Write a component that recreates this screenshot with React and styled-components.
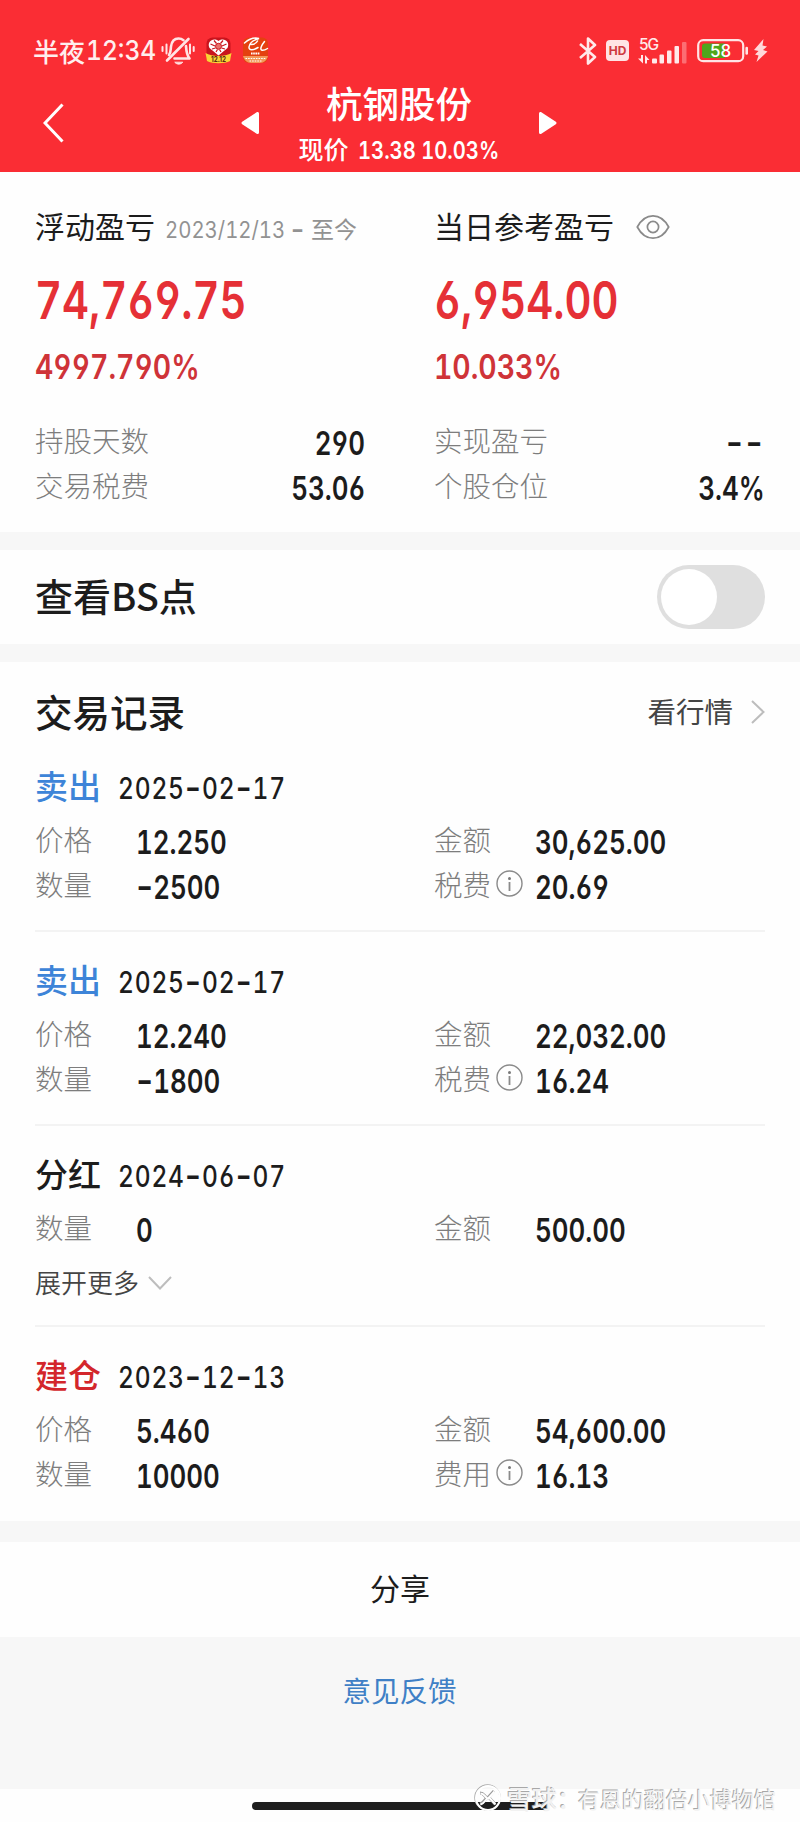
import { useState } from "react";
import styled, { createGlobalStyle } from "styled-components";

const GlobalStyle = createGlobalStyle`
  body {
    margin: 0;
    background: #fefefe;
    font-family: "Noto Sans CJK SC", sans-serif;
    color: #1c1c1c;
  }

  * {
    box-sizing: border-box;
  }
`;

const Page = styled.div`
  position: relative;
  width: 800px;
  height: 1822px;
  overflow: hidden;
  display: flex;
  flex-direction: column;
`;

const Header = styled.header`
  height: 172px;
  background: #fa2d34;
  color: #fff;
`;

const StatusBar = styled.div`
  display: flex;
  align-items: center;
  height: 72px;
  padding: 29px 32px 0 33px;
`;

const StatusTime = styled.div`
  display: flex;
  align-items: center;
  gap: 1px;
  font-size: 26px;
  font-weight: 500;
  line-height: 44px;
  width: 128px;
  color: #ffeeee;
  white-space: nowrap;
`;

const StatusIcons = styled.div`
  display: flex;
  align-items: center;
  gap: ${(props) => props.$gap}px;
  margin-left: ${(props) => props.$push || 0};
`;

const NavBar = styled.div`
  display: flex;
  align-items: center;
  height: 100px;
  padding: 2px 43px 0;
`;

const NavCenter = styled.div`
  width: 280px;
  display: flex;
  flex-direction: column;
  align-items: center;
`;

const StockName = styled.div`
  font-size: 36.5px;
  font-weight: 500;
  line-height: 46px;
  margin-top: 2px;
  margin-bottom: 1px;
`;

const StockPrice = styled.div`
  display: flex;
  align-items: center;
  gap: 9px;
  width: 201px;
  font-size: 25px;
  font-weight: 500;
  line-height: 42px;
  white-space: nowrap;
`;

// Narrow upright figures, squeezed horizontally
const Figures = styled.span`
  display: inline-block;
  font-family: Inter, sans-serif;
  font-size: ${(props) => props.$size || 33}px;
  font-weight: ${(props) => props.$weight || 600};
  font-feature-settings: "tnum", "cv03", "cv04";
  letter-spacing: ${(props) => props.$spacing || 0}px;
  transform: translateY(${(props) => props.$drop ?? 3.5}px)
    scaleX(${(props) => props.$squeeze || 0.785});
  transform-origin: ${(props) => props.$origin || "left"} center;
  white-space: nowrap;
`;

const Dash = styled.span`
  font-size: 1.45em;
  font-weight: 400;
  font-feature-settings: normal;
  line-height: 0;
  vertical-align: -0.09em;
`;

const Num = ({ children, ...rest }) => (
  <Figures {...rest}>
    {children.split(/(-+)/).map((part, i) =>
      part.startsWith("-") ? <Dash key={i}>{part}</Dash> : part
    )}
  </Figures>
);

const Section = styled.section`
  background: #fefefe;
  border-bottom: ${(props) => props.$gap || 0}px solid #f7f7f7;
`;

const Summary = styled(Section)`
  display: grid;
  grid-template-columns: 330px 331px;
  column-gap: 69px;
  height: 378px;
  padding: 31px 35px 0 35px;
`;

const SummaryTitle = styled.div`
  display: flex;
  align-items: center;
  height: 44px;
  font-size: 30px;
  line-height: 44px;
  white-space: nowrap;
`;

const Period = styled.span`
  display: flex;
  align-items: center;
  margin-left: 10px;
  padding-top: 5px;
  font-size: 23px;
  color: #929292;
`;

const PeriodStart = styled.span`
  width: 146px;
`;

const EyeButton = styled.span`
  display: flex;
  margin: 3px 0 0 22px;
`;

const Profit = styled.div`
  display: flex;
  align-items: center;
  height: 66px;
  margin-top: 16px;
  color: #e53036;
`;

const ProfitRate = styled.div`
  display: flex;
  align-items: center;
  height: 46px;
  margin: 10px 0 32px;
  color: #cf3338;
`;

const Row = styled.div`
  display: flex;
  align-items: center;
  height: 45px;
  line-height: 45px;
`;

const Label = styled.span`
  display: flex;
  align-items: center;
  gap: 5px;
  width: ${(props) => props.$width || "auto"};
  font-size: 28.5px;
  font-weight: 300;
  color: #7d7d7d;
`;

const StatRow = styled(Row)`
  justify-content: space-between;
`;

const ToggleSection = styled(Section)`
  display: flex;
  align-items: center;
  justify-content: space-between;
  height: 112px;
  padding: 0 35px 0 35px;
`;

const ToggleLabel = styled.div`
  font-size: 38px;
  font-weight: 500;
  line-height: 60px;
  margin-bottom: 4px;
`;

const Switch = styled.button`
  width: 108px;
  height: 64px;
  padding: 4px;
  border: 0;
  border-radius: 32px;
  background: ${(props) => (props.$on ? "#fa2d34" : "#dfdfdf")};
  display: flex;
  justify-content: ${(props) => (props.$on ? "flex-end" : "flex-start")};
`;

const Knob = styled.span`
  width: 56px;
  height: 56px;
  border-radius: 50%;
  background: #fff;
`;

const Records = styled(Section)`
  height: 880px;
  padding: 19px 35px 0 35px;
`;

const RecordsHead = styled.div`
  display: flex;
  align-items: center;
  justify-content: space-between;
  height: 58px;
  font-size: 37.5px;
  font-weight: 500;
`;

const MarketLink = styled.a`
  display: flex;
  align-items: center;
  gap: 18px;
  font-size: 28.5px;
  font-weight: 400;
  color: #444;

  svg {
    margin-top: 4px;
  }
`;

const Record = styled.div`
  padding: ${(props) => (props.$first ? 15 : 16)}px 0 24px;
  border-bottom: 2px solid #f3f3f3;

  &:last-child {
    border-bottom: 0;
  }
`;

const RecordTitle = styled.div`
  display: flex;
  align-items: center;
  height: 62px;
`;

const Kind = styled.span`
  width: 83px;
  font-size: 33px;
  font-weight: 500;
  line-height: 60px;
  margin-bottom: 1px;
  color: ${(props) => props.$color};
`;

const RecordGrid = styled.div`
  display: grid;
  grid-template-columns: 399px 1fr;
`;

const Expand = styled.div`
  display: flex;
  align-items: center;
  gap: 9px;
  height: 40px;
  margin-top: 12px;
  font-size: 26px;
  font-weight: 350;
  color: #444;

  svg {
    margin-top: 3px;
  }
`;

const Share = styled.div`
  height: 95px;
  background: #fefefe;
  text-align: center;
  font-size: 30px;
  line-height: 91px;
`;

const Footer = styled.footer`
  height: 152px;
  padding-right: 1px;
  background: #f7f7f7;
  text-align: center;
  font-size: 28.5px;
  line-height: 106px;
  color: #3f80c6;
`;

const HomeArea = styled.div`
  flex: 1;
  display: flex;
  justify-content: center;
  align-items: flex-start;
  padding-top: 13px;
`;

const HomeBar = styled.div`
  width: 296px;
  height: 8px;
  border-radius: 4px;
  background: #1e1e1e;
`;

const Watermark = styled.div`
  position: absolute;
  right: 24px;
  bottom: 7px;
  display: flex;
  align-items: center;
  font-size: 22px;
  line-height: 34px;
  color: #f2f2f2;
  text-shadow: -1px -1px 0 #a8a8a8;
  white-space: nowrap;
`;

const WatermarkBrand = styled.span`
  width: 71px;
  margin-left: 5px;
  font-size: 25px;
  font-weight: 500;
`;

const MutedBell = () => (
  <svg width="34" height="30" viewBox="0 0 34 30" fill="none" stroke="#ffe4e5" strokeWidth="2.600" strokeLinecap="round" strokeLinejoin="round">
    <path d="M8 19C10 16.500 9.600 13 10 10.500C10.700 5.500 13.500 2.500 17.500 2.500C19.500 2.500 21 3 22.500 4.200" />
    <path d="M25 10C25.300 14.500 25.500 18.500 28.500 22.500H13.500" />
    <path d="M27.500 3L6 24.500" />
    <path d="M14 26.500C16 28.800 19.500 28.800 21.500 26.500Z" fill="#ffe4e5" strokeWidth="1" />
    <path d="M5.500 8.500V17.500M1.500 11V15M29 8.500V17.500M32.700 11V15" strokeWidth="2" />
  </svg>
);

const HeartApp = () => (
  <svg width="27" height="27" viewBox="0 0 27 27">
    <rect x="1.500" y="0.500" width="24" height="25" rx="6" fill="#c8141d" />
    <path d="M13.500 18.500L4.500 11C1.500 5 8 0 13.500 4C19 0 25.500 5 22.500 11Z" fill="#fff" />
    <path d="M5.500 7L10 9M21.500 7L17 9M9 3.500L11.500 6.500M18 3.500L15.500 6.500M7 12L10.500 11M20 12L16.500 11M11 15L12.500 12.500M16 15L14.500 12.500" stroke="#c8141d" strokeWidth="1.200" />
    <circle cx="13.500" cy="9.300" r="3" fill="#e8706a" stroke="#c8141d" strokeWidth="1" />
    <path d="M0.500 16C7 20 20 20 26.500 16L25 24C20 27 7 27 2 24Z" fill="#f9d435" />
    <text x="13.500" y="24.500" fontSize="7.500" fontWeight="700" fontFamily="Inter, sans-serif" textAnchor="middle" textLength="15" lengthAdjust="spacingAndGlyphs" fill="#5a2a10">12.12</text>
  </svg>
);

const MallApp = () => (
  <svg width="27" height="27" viewBox="0 0 27 27">
    <rect x="1" y="0.500" width="25" height="25.500" rx="6" fill="#e4410f" />
    <path d="M2.500 6C7 2 13 0.500 17 1.500C11 3 7.500 6 7 10C6.700 13.500 11 13.500 16 10.500M9 7.500C12 7.500 14.500 6 15.500 4" fill="none" stroke="#fff" strokeWidth="1.500" strokeLinecap="round" />
    <path d="M22.500 4.500C20.500 7 17 12.500 20 13.300C22 13.500 24 12.500 25.500 11.500" fill="none" stroke="#fff" strokeWidth="1.500" strokeLinecap="round" />
    <path d="M9 16.500H18" stroke="#fff" strokeWidth="2" strokeDasharray="1.600 .6" />
    <path d="M1 19H26C25 23 22 26 18 26H9C5 26 2 23 1 19Z" fill="#f3995a" />
    <path d="M3.500 21.500H23.500M7.500 24H19.500" stroke="#fff" strokeWidth="1.100" strokeDasharray="1.600 1" />
  </svg>
);

const Bluetooth = () => (
  <svg width="18" height="28" viewBox="0 0 18 28" fill="none" stroke="#ffe9ea" strokeWidth="2.600" strokeLinejoin="round">
    <path d="M1 7L16 20L9 26.500V1.500L16 8L1 21" />
  </svg>
);

const HdBadge = styled.span`
  width: 23px;
  height: 21px;
  border-radius: 4px;
  background: #ffe4e5;
  color: #cf3a40;
  font: 700 12px/21px Inter, sans-serif;
  text-align: center;
`;

const Signal = () => (
  <svg width="50" height="30" viewBox="0 -3 50 30" fill="#ffe9ea">
    <text x="1" y="10.500" fontSize="15.500" fontWeight="500" fontFamily="Inter, sans-serif" textLength="20">5G</text>
    <path d="M5 16V24.500L0 19.500H3V16ZM7 24.500V16L11.500 21H9V24.500Z" />
    <rect x="14" y="19.500" width="5" height="5" rx="1" />
    <rect x="21.500" y="15.500" width="4.500" height="9" rx="1" />
    <rect x="29" y="11.500" width="4.500" height="13" rx="1" />
    <rect x="36.500" y="7" width="4.500" height="17.500" rx="1" />
    <rect x="44" y="3" width="4.500" height="21.500" rx="1" opacity="0.35" />
  </svg>
);

const Battery = () => (
  <svg width="71" height="25" viewBox="0 0 71 25">
    <rect x="1.200" y="2.200" width="45" height="21" rx="5" fill="none" stroke="#ffe4e5" strokeWidth="2.200" />
    <path d="M8 5.500H28V20H8A3 3 0 0 1 5 17V8.500A3 3 0 0 1 8 5.500Z" fill="#4fa61c" />
    <path d="M49.700 10V15.500" stroke="#ffe4e5" strokeWidth="2.600" strokeLinecap="round" />
    <text x="23.500" y="18.500" fontSize="17" fontWeight="500" fontFamily="Inter, sans-serif" textAnchor="middle" fill="#fff">58</text>
    <path d="M66.500 1L57 12L61.500 13L58 16.500L61.500 17.500L59.500 24L70.500 13.500L66 12L70 8.500L65.500 7.500Z" fill="#ffd9da" />
  </svg>
);

const Eye = () => (
  <svg width="34" height="26" viewBox="0 0 34 26" fill="none" stroke="#8a8a8a" strokeWidth="1.700">
    <path d="M1.300 13C5 6 10.500 1.800 17 1.800S29 6 32.700 13C29 20 23.500 24.200 17 24.200S5 20 1.300 13Z" />
    <circle cx="17" cy="13" r="5.600" />
  </svg>
);

const Info = () => (
  <svg width="27" height="27" viewBox="0 0 27 27" fill="none" stroke="#8a8a8a">
    <circle cx="13.500" cy="13.500" r="12.500" strokeWidth="1.400" />
    <path d="M13.500 12V21" strokeWidth="1.800" />
    <circle cx="13.500" cy="8.500" r="1.500" fill="#777" stroke="none" />
  </svg>
);

const Chevron = ({ width, height, d, color = "#bdbdbd", stroke = 2 }) => (
  <svg width={width} height={height} viewBox={`0 0 ${width} ${height}`} fill="none" stroke={color} strokeWidth={stroke}>
    <path d={d} />
  </svg>
);

const Triangle = ({ flip }) => (
  <svg width="18" height="22" viewBox="0 0 18 22" fill="#fff" stroke="#fff" strokeWidth="3" strokeLinejoin="round">
    <path d={flip ? "M1.500 1.500V20.500L16 11Z" : "M16.500 1.500V20.500L2 11Z"} />
  </svg>
);

const BrandLogo = () => (
  <svg width="28" height="28" viewBox="0 0 28 28" fill="none">
    <circle cx="13.500" cy="13.500" r="12.500" stroke="#a8a8a8" strokeWidth="1.500" />
    <circle cx="14" cy="14" r="12" stroke="#fff" strokeWidth="2" />
    <path d="M6 9C10 9 10 12 13 14C10 16 10 19 6 20M20 7L14.500 13L21 20" stroke="#9a9a9a" strokeWidth="3" />
    <path d="M6.500 9.500C10.500 9.500 10.500 12.500 13.500 14.500C10.500 16.500 10.500 19.500 6.500 20.500M20.500 7.500L15 13.500L21.500 20.500" stroke="#fff" strokeWidth="2" />
  </svg>
);

const BLUE = "#3d84d8";
const RED = "#d3262b";
const BLACK = "#1c1c1c";

const records = [
  {
    kind: "卖出",
    color: BLUE,
    date: "2025-02-17",
    items: [
      { label: "价格", value: "12.250" },
      { label: "金额", value: "30,625.00" },
      { label: "数量", value: "-2500" },
      { label: "税费", value: "20.69", info: true },
    ],
  },
  {
    kind: "卖出",
    color: BLUE,
    date: "2025-02-17",
    items: [
      { label: "价格", value: "12.240" },
      { label: "金额", value: "22,032.00" },
      { label: "数量", value: "-1800" },
      { label: "税费", value: "16.24", info: true },
    ],
  },
  {
    kind: "分红",
    color: BLACK,
    date: "2024-06-07",
    more: true,
    items: [
      { label: "数量", value: "0" },
      { label: "金额", value: "500.00" },
    ],
  },
  {
    kind: "建仓",
    color: RED,
    date: "2023-12-13",
    items: [
      { label: "价格", value: "5.460" },
      { label: "金额", value: "54,600.00" },
      { label: "数量", value: "10000" },
      { label: "费用", value: "16.13", info: true },
    ],
  },
];

const App = () => {
  const [showPoints, setShowPoints] = useState(false);

  return (
    <Page>
      <GlobalStyle />
      <Header>
        <StatusBar>
          <StatusTime>
            半夜
            <Num $size={27} $weight={500} $squeeze={0.91} $drop={0}>
              12:34
            </Num>
          </StatusTime>
          <StatusIcons $gap={10}>
            <MutedBell />
            <HeartApp />
            <MallApp />
          </StatusIcons>
          <StatusIcons $gap={9} $push="auto">
            <Bluetooth />
            <HdBadge>HD</HdBadge>
            <Signal />
            <Battery />
          </StatusIcons>
        </StatusBar>
        <NavBar>
          <Chevron width={21} height={40} d="M19.500 1.500L2 20L19.500 38.500" color="#fff" stroke={3} />
          <StatusIcons $gap={0} $push="177px">
            <Triangle />
            <NavCenter>
              <StockName>杭钢股份</StockName>
              <StockPrice>
                现价
                <Num $size={24.5} $squeeze={0.825} $drop={2}>
                  13.38 10.03%
                </Num>
              </StockPrice>
            </NavCenter>
            <Triangle flip />
          </StatusIcons>
        </NavBar>
      </Header>

      <Summary $gap={18}>
        <div>
          <SummaryTitle>
            浮动盈亏
            <Period>
              <PeriodStart>
                <Num $size={23} $weight={400} $squeeze={0.885} $drop={1}>
                  2023/12/13 -
                </Num>
              </PeriodStart>
              至今
            </Period>
          </SummaryTitle>
          <Profit>
            <Num $size={52.5} $squeeze={0.795}>
              74,769.75
            </Num>
          </Profit>
          <ProfitRate>
            <Num $size={34} $squeeze={0.835}>
              4997.790%
            </Num>
          </ProfitRate>
          <StatRow>
            <Label>持股天数</Label>
            <Num $origin="right">290</Num>
          </StatRow>
          <StatRow>
            <Label>交易税费</Label>
            <Num $origin="right">53.06</Num>
          </StatRow>
        </div>
        <div>
          <SummaryTitle>
            当日参考盈亏
            <EyeButton>
              <Eye />
            </EyeButton>
          </SummaryTitle>
          <Profit>
            <Num $size={52.5} $squeeze={0.795}>
              6,954.00
            </Num>
          </Profit>
          <ProfitRate>
            <Num $size={34} $squeeze={0.835}>
              10.033%
            </Num>
          </ProfitRate>
          <StatRow>
            <Label>实现盈亏</Label>
            <Num $origin="right" $spacing={3}>
              --
            </Num>
          </StatRow>
          <StatRow>
            <Label>个股仓位</Label>
            <Num $origin="right">3.4%</Num>
          </StatRow>
        </div>
      </Summary>

      <ToggleSection $gap={18}>
        <ToggleLabel>查看BS点</ToggleLabel>
        <Switch $on={showPoints} onClick={() => setShowPoints(!showPoints)}>
          <Knob />
        </Switch>
      </ToggleSection>

      <Records $gap={21}>
        <RecordsHead>
          交易记录
          <MarketLink>
            看行情
            <Chevron width={14} height={24} d="M1 1L12.500 12L1 23" />
          </MarketLink>
        </RecordsHead>
        {records.map((r, i) => (
          <Record key={i} $first={i === 0}>
            <RecordTitle>
              <Kind $color={r.color}>{r.kind}</Kind>
              <Num $size={30} $weight={500} $spacing={1} $squeeze={0.817} $drop={3}>
                {r.date}
              </Num>
            </RecordTitle>
            <RecordGrid>
              {r.items.map((item) => (
                <Row key={item.label}>
                  <Label $width="101px">
                    {item.label}
                    {item.info && <Info />}
                  </Label>
                  <Num>{item.value}</Num>
                </Row>
              ))}
            </RecordGrid>
            {r.more && (
              <Expand>
                展开更多
                <Chevron width={24} height={14} d="M1 1L12 12.500L23 1" />
              </Expand>
            )}
          </Record>
        ))}
      </Records>

      <Share>分享</Share>
      <Footer>意见反馈</Footer>
      <HomeArea>
        <HomeBar />
      </HomeArea>
      <Watermark>
        <BrandLogo />
        <WatermarkBrand>雪球：</WatermarkBrand>
        有恩的翻倍小博物馆
      </Watermark>
    </Page>
  );
};

export default App;
